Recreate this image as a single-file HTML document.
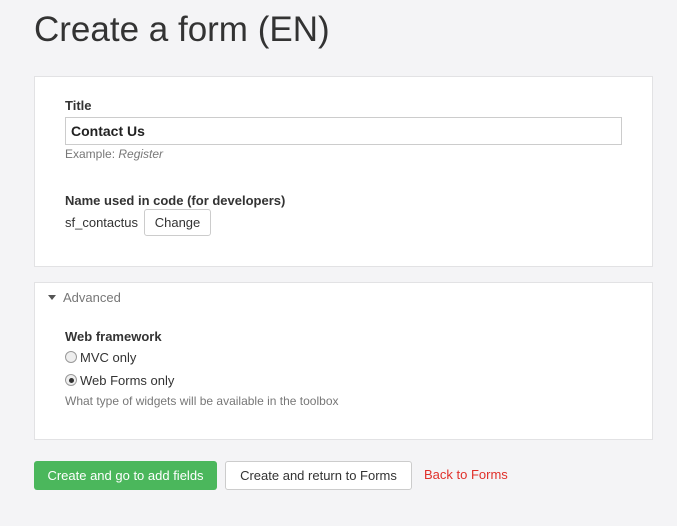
<!DOCTYPE html>
<html><head><style>
body{margin:0;width:677px;height:526px;background:#f4f4f6;font-family:"Liberation Sans",sans-serif;color:#333;position:relative;overflow:hidden}
.a{position:absolute;white-space:nowrap}
.panel{position:absolute;left:34px;width:619px;background:#fff;border:1px solid #e2e2e4;box-sizing:border-box}
.radio{display:inline-block;width:12px;height:12px;border:1px solid #999;border-radius:50%;box-sizing:border-box;background:#eee;vertical-align:-1px;margin-right:3px;position:relative}
.btn{position:absolute;box-sizing:border-box;font-size:13px;text-align:center;border-radius:3px}
</style></head><body>
<div class="a" style="left:34px;top:10px;font-size:35px;color:#333;font-weight:300">Create a form (EN)</div>
<div class="panel" style="top:76px;height:191px"></div>
<div class="a" style="left:65px;top:98px;font-size:13px;font-weight:bold">Title</div>
<div class="a" style="left:65px;top:117px;width:557px;height:28px;border:1px solid #ccc;box-sizing:border-box;background:#fff;font-size:14px;padding:5px 5px;font-weight:bold;color:#222">Contact Us</div>
<div class="a" style="left:65px;top:147px;font-size:12px;color:#777">Example: <i>Register</i></div>
<div class="a" style="left:65px;top:193px;font-size:13px;font-weight:bold">Name used in code (for developers)</div>
<div class="a" style="left:65px;top:215px;font-size:13px">sf_contactus</div>
<div class="btn" style="left:144px;top:209px;width:67px;height:27px;border:1px solid #ccc;background:#fff;line-height:25px">Change</div>
<div class="panel" style="top:282px;height:158px"></div>
<div class="a" style="left:48px;top:295px;width:0;height:0;border-left:4.5px solid transparent;border-right:4.5px solid transparent;border-top:5px solid #555"></div>
<div class="a" style="left:63px;top:290px;font-size:13px;color:#777">Advanced</div>
<div class="a" style="left:65px;top:329px;font-size:13px;font-weight:bold">Web framework</div>
<div class="a" style="left:65px;top:350px;font-size:13px"><span class="radio"></span>MVC only</div>
<div class="a" style="left:65px;top:373px;font-size:13px"><span class="radio"><span style="position:absolute;left:2.5px;top:2.5px;width:5px;height:5px;border-radius:50%;background:#333"></span></span>Web Forms only</div>
<div class="a" style="left:65px;top:394px;font-size:12px;color:#777">What type of widgets will be available in the toolbox</div>
<div class="btn" style="left:34px;top:461px;width:183px;height:29px;background:#4bb75c;color:#fff;line-height:29px">Create and go to add fields</div>
<div class="btn" style="left:225px;top:461px;width:187px;height:29px;border:1px solid #ccc;background:#fff;line-height:27px">Create and return to Forms</div>
<div class="a" style="left:424px;top:467px;font-size:13px;color:#e0302a">Back to Forms</div>
</body></html>
